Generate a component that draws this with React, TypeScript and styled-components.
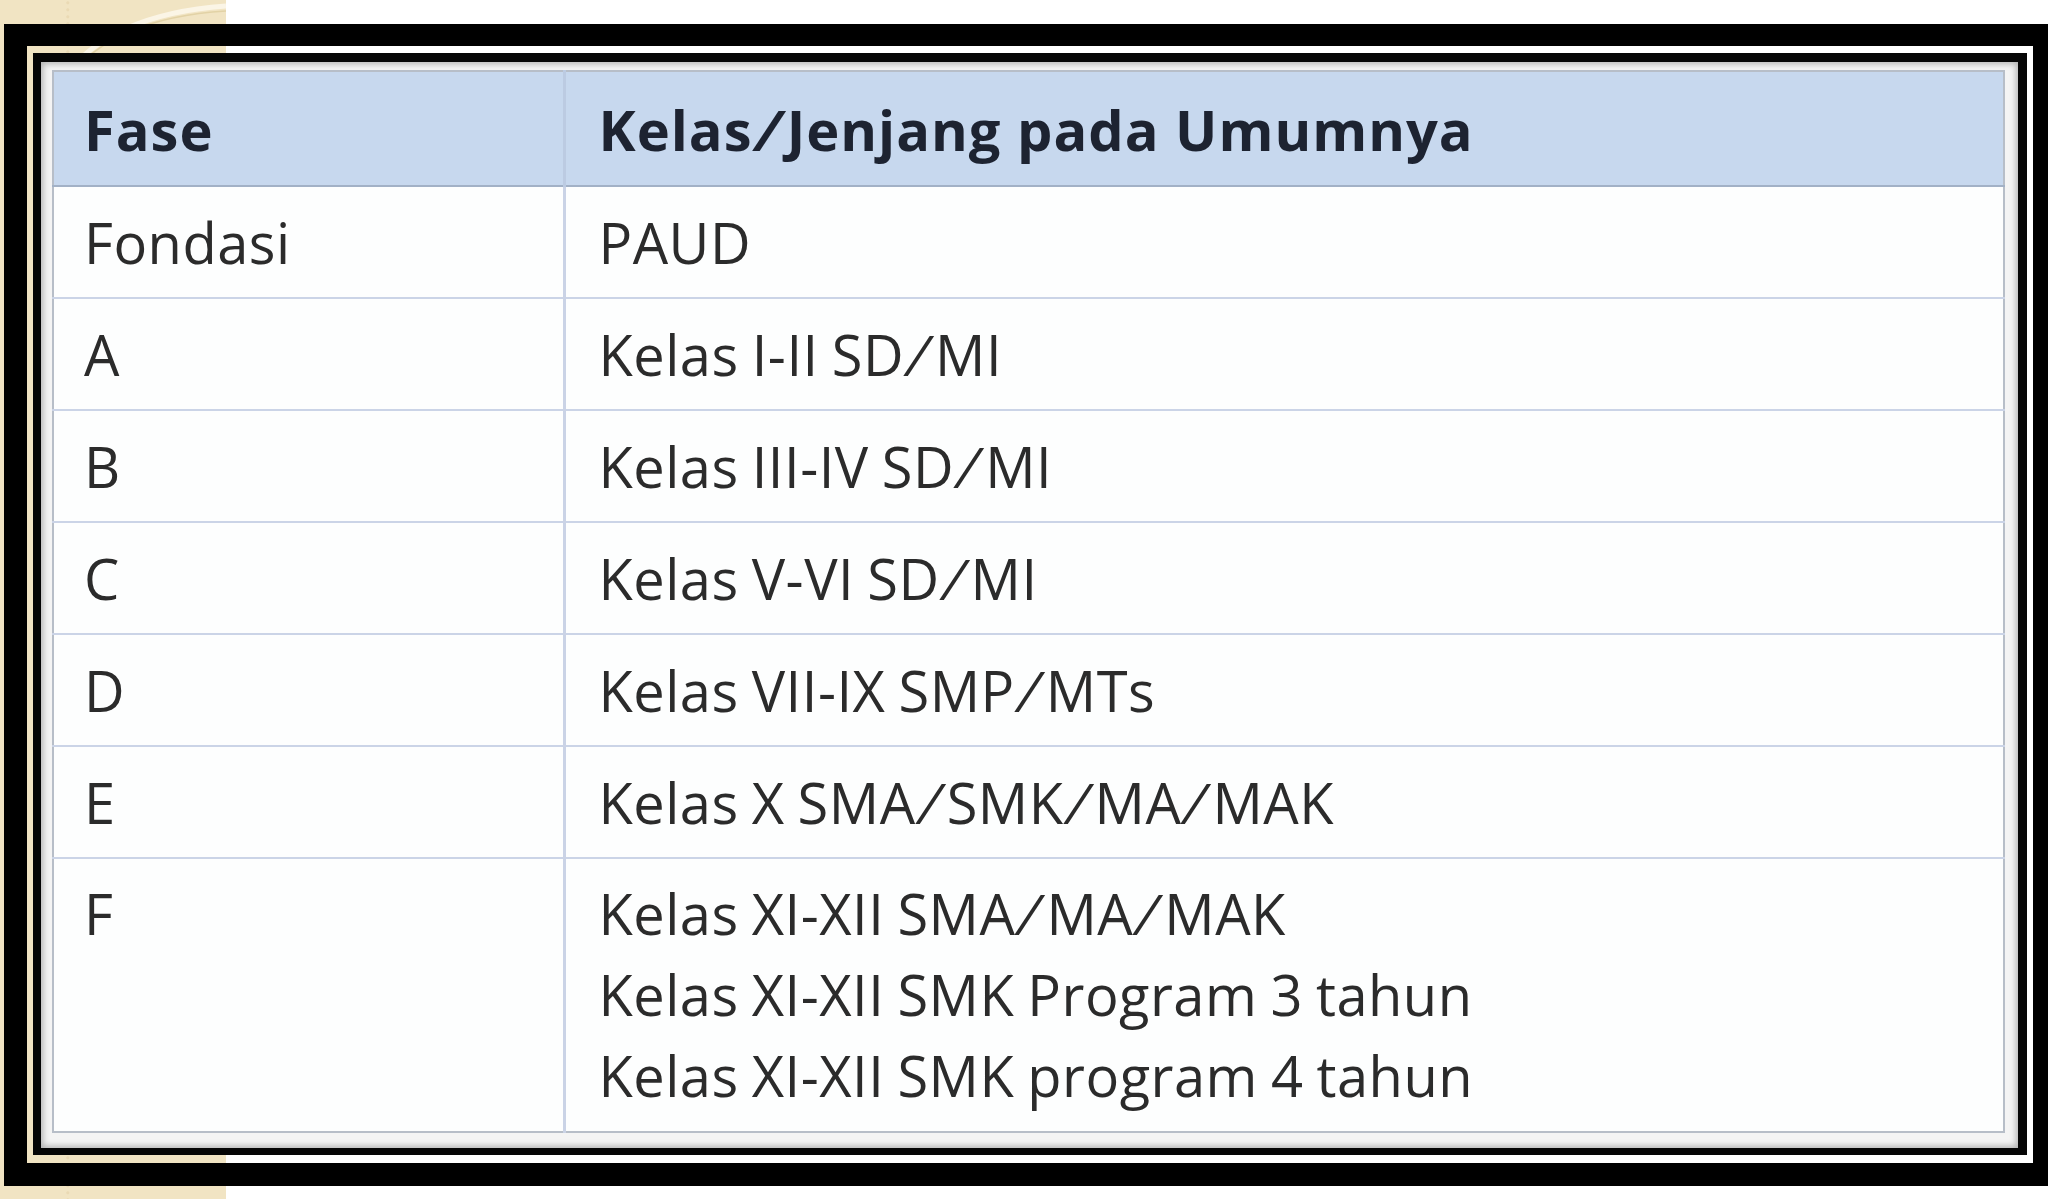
import React from 'react';
import styled, { createGlobalStyle } from 'styled-components';

const GlobalStyle = createGlobalStyle`
  html, body {
    margin: 0;
    padding: 0;
    background: #ffffff;
  }
  * {
    box-sizing: border-box;
  }
`;

const Page = styled.div`
  position: relative;
  width: 2048px;
  height: 1199px;
  overflow: hidden;
  padding: 24px 0 13px 4px;
  background:
    radial-gradient(circle at 30% 40%, rgba(200, 170, 110, 0.18) 1px, transparent 2px) 0 0 / 9px 7px,
    linear-gradient(to right, #f1e4c3 0, #f1e4c3 226px, #ffffff 226px);
  background-repeat: repeat-y, no-repeat;
  background-size: 226px 7px, 100% 100%;
`;

const Ornament = styled.svg`
  position: absolute;
  left: 0;
  top: 0;
  width: 226px;
  height: 80px;
  pointer-events: none;
`;

const OuterFrame = styled.div`
  position: relative;
  z-index: 1;
  height: 100%;
  border-style: solid;
  border-color: #000;
  border-width: 22px 15px 23px 23px;
  padding: 7px 6px 8px 6px;
`;

const InnerFrame = styled.div`
  height: 100%;
  border-style: solid;
  border-color: #050505;
  border-width: 9px 9px 7px 8px;
`;

const Mat = styled.div`
  height: 100%;
  padding: 8px 13px 15px 11px;
  background: #f4f4f4;
  box-shadow: inset 0 0 6px 2px rgba(0, 0, 0, 0.28);
`;

const Table = styled.table`
  width: 100%;
  height: 100%;
  border-collapse: collapse;
  table-layout: fixed;
  background: #fdfefe;
  border: 2px solid #b7bec8;
  font-family: 'Open Sans', 'Noto Sans', sans-serif;
`;

const HeadRow = styled.tr`
  height: 115px;
  background: #c7d8ee;
`;

const Row = styled.tr<{ $tall?: boolean }>`
  height: ${(p) => (p.$tall ? 'auto' : '112px')};
  border-top: 2px solid #cbd4e7;
`;

const HeadCell = styled.th<{ $first?: boolean }>`
  text-align: left;
  vertical-align: middle;
  padding: 0 0 0 ${(p) => (p.$first ? '30px' : '33px')};
  font-size: 56px;
  font-weight: 700;
  color: #1d2331;
  letter-spacing: 1px;
  border-bottom: 2px solid #a2b1c6;
  border-left: ${(p) => (p.$first ? 'none' : '3px solid #bccbe2')};
  width: ${(p) => (p.$first ? '511px' : 'auto')};
`;

const Cell = styled.td<{ $first?: boolean; $top?: boolean }>`
  vertical-align: ${(p) => (p.$top ? 'top' : 'middle')};
  padding: ${(p) => (p.$top ? '14px' : '0')} 0 0 ${(p) => (p.$first ? '30px' : '33px')};
  font-size: 56px;
  line-height: 81px;
  font-weight: 400;
  color: #2b2b2b;
  letter-spacing: 0.5px;
  word-spacing: -2px;
  border-left: ${(p) => (p.$first ? 'none' : '3px solid #cad3e6')};
`;

const Line = styled.div`
  white-space: nowrap;
`;

const Slash = styled.span`
  display: inline-block;
  margin: 0 5px;
  transform: skewX(-16deg);
`;

// the source font draws a wide, shallow slash; lean ours over to match
const withSlashes = (text: string) =>
  text.split('/').map((part, i) => (
    <React.Fragment key={i}>
      {i > 0 && <Slash>/</Slash>}
      {part}
    </React.Fragment>
  ));

const rows: [string, string[]][] = [
  ['Fondasi', ['PAUD']],
  ['A', ['Kelas I-II SD/MI']],
  ['B', ['Kelas III-IV SD/MI']],
  ['C', ['Kelas V-VI SD/MI']],
  ['D', ['Kelas VII-IX SMP/MTs']],
  ['E', ['Kelas X SMA/SMK/MA/MAK']],
  [
    'F',
    [
      'Kelas XI-XII SMA/MA/MAK',
      'Kelas XI-XII SMK Program 3 tahun',
      'Kelas XI-XII SMK program 4 tahun',
    ],
  ],
];

const App = () => {
  return (
    <>
      <GlobalStyle />
      <Page>
        <Ornament viewBox="0 0 226 80">
          <path d="M62 80 C 90 40, 140 12, 226 6" fill="none" stroke="#fbf5e6" strokeWidth="5" />
          <path d="M66 80 C 94 43, 143 16, 226 11" fill="none" stroke="#e2d2a6" strokeWidth="1.5" />
        </Ornament>
        <OuterFrame>
          <InnerFrame>
            <Mat>
              <Table>
                <thead>
                  <HeadRow>
                    <HeadCell $first>Fase</HeadCell>
                    <HeadCell>{withSlashes('Kelas/Jenjang pada Umumnya')}</HeadCell>
                  </HeadRow>
                </thead>
                <tbody>
                  {rows.map(([fase, kelas]) => {
                    const tall = kelas.length > 1;
                    return (
                      <Row key={fase} $tall={tall}>
                        <Cell $first $top={tall}>
                          {fase}
                        </Cell>
                        <Cell $top={tall}>
                          {kelas.map((k) => (
                            <Line key={k}>{withSlashes(k)}</Line>
                          ))}
                        </Cell>
                      </Row>
                    );
                  })}
                </tbody>
              </Table>
            </Mat>
          </InnerFrame>
        </OuterFrame>
      </Page>
    </>
  );
};

export default App;
